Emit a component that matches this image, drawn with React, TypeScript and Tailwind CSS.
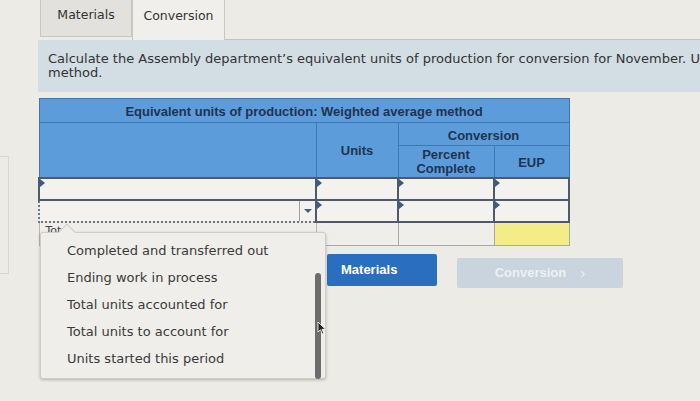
import React from 'react';

const options = [
  'Completed and transferred out',
  'Ending work in process',
  'Total units accounted for',
  'Total units to account for',
  'Units started this period',
];

// small triangle marker in the corner of the entry cells
const Marker = () => (
  <span className="absolute left-0 top-0 w-0 h-0 border-t-[4px] border-b-[4px] border-l-[5px] border-t-transparent border-b-transparent border-l-[#3a5a8a]" />
);

const InputCell = ({ marker = true }: { marker?: boolean }) => (
  <td className="relative p-0 border-2 border-[#4c5a6c] bg-[#f3f2ee]">
    {marker && <Marker />}
  </td>
);

export default function App() {
  return (
    <div className="relative w-[700px] h-[401px] overflow-hidden bg-[#ecebe6] font-['DejaVu_Sans',sans-serif] text-[#333]">
      {/* faint sidebar remnants */}
      <div className="absolute left-0 top-[156px] w-[9px] h-[118px] border border-l-0 border-[#d8d6d1]" />

      {/* Tabs */}
      <div className="flex h-[40px]">
        <div className="w-[40px]" />
        <div className="w-[92px] h-[37px] border border-t-0 border-[#c9c7c2] bg-[#e2e1dd] flex items-start justify-center pt-[6px] text-[12.5px] text-[#333]">
          Materials
        </div>
        <div className="w-[93px] h-[40px] border border-t-0 border-b-0 border-[#c9c7c2] bg-[#f0efeb] flex items-start justify-center pt-[7px] text-[12.5px] text-[#333]">
          Conversion
        </div>
        <div className="flex-1 border-b border-[#bfc3c6]" />
      </div>

      {/* Instructions */}
      <div className="ml-[38px] h-[52px] bg-[#d3dde4] px-[10px] pt-[12px] text-[13px] leading-[14px] text-[#333] whitespace-nowrap overflow-hidden">
        Calculate the Assembly department’s equivalent units of production for conversion for November. Use the weighted average
        <br />
        method.
      </div>

      {/* Table */}
      <div className="ml-[38px] mt-[6px] w-[530px]">
        <table className="w-[530px] border-collapse table-fixed font-['Liberation_Sans',Arial,sans-serif] font-bold text-[13px] leading-[15px] text-[#1f3350]">
          <colgroup>
            <col className="w-[277px]" />
            <col className="w-[82px]" />
            <col className="w-[96px]" />
            <col className="w-[75px]" />
          </colgroup>
          <tbody>
            <tr className="h-[24px] bg-[#5d9cdb]">
              <td colSpan={4} className="border border-[#3f77b3] text-center p-0 pt-[1px]">
                Equivalent units of production: Weighted average method
              </td>
            </tr>
            <tr className="h-[23px] bg-[#5d9cdb]">
              <td rowSpan={2} className="border border-[#3f77b3] p-0" />
              <td rowSpan={2} className="border border-[#3f77b3] text-center align-middle p-0 pt-[2px]">Units</td>
              <td colSpan={2} className="border border-[#3f77b3] text-center p-0 pt-[3px]">Conversion</td>
            </tr>
            <tr className="h-[32px] bg-[#5d9cdb]">
              <td className="border border-[#3f77b3] text-center leading-[14px] p-0 pt-[1px]">
                Percent
                <br />
                Complete
              </td>
              <td className="border border-[#3f77b3] text-center p-0 pt-[2px]">EUP</td>
            </tr>
            <tr className="h-[22px]">
              <InputCell />
              <InputCell />
              <InputCell />
              <InputCell />
            </tr>
            <tr className="h-[22px]">
              <td className="relative p-0 border-2 border-dotted border-[#6a7686] bg-[#f3f2ee]">
                <div className="absolute right-0 top-0 bottom-0 w-[16px] border-l border-[#9aa2ac] flex items-center justify-center">
                  <span className="w-0 h-0 border-l-[4px] border-r-[4px] border-t-[4px] border-l-transparent border-r-transparent border-t-[#46607f]" />
                </div>
              </td>
              <InputCell />
              <InputCell />
              <InputCell />
            </tr>
            <tr className="h-[24px]">
              <td className="relative p-0 border border-[#b9b7b2] bg-[#efeeea] font-['DejaVu_Sans',sans-serif] font-normal text-[11px] text-[#444] align-top pl-[6px]">
                Tot
              </td>
              <td className="p-0 border border-[#a9a9a9] bg-[#efeeea]" />
              <td className="p-0 border border-[#a9a9a9] bg-[#efeeea]" />
              <td className="p-0 border border-[#a9a9a9] bg-[#f4ec86]" />
            </tr>
          </tbody>
        </table>
      </div>

      {/* Buttons */}
      <div className="flex items-start gap-[20px] ml-[327px] mt-[8px] font-['Liberation_Sans',Arial,sans-serif] font-bold text-[13px]">
        <div className="w-[110px] h-[32px] bg-[#2a6ec0] text-white flex items-center pl-[14px] rounded-[2px]">
          Materials
        </div>
        <div className="w-[166px] h-[30px] mt-[4px] bg-[#c9d4de] text-[#eef1f4] flex items-center justify-center gap-[14px] rounded-[2px]">
          <span>Conversion</span>
          <span className="font-normal text-[15px]">›</span>
        </div>
      </div>

      {/* Open dropdown list */}
      <div className="absolute left-[40px] top-[232px] w-[286px] h-[147px] bg-[#efeeea] border border-[#cfcdc8] rounded-[3px] shadow-[0_1px_3px_rgba(0,0,0,0.25)]">
        <span className="absolute left-[20px] -top-[7px] w-[12px] h-[12px] rotate-45 bg-[#efeeea] border-l border-t border-[#cfcdc8]" />
        <ul className="pt-[9px] pl-[26px] text-[13px] text-[#3a3a3a]">
          {options.map((o) => (
            <li key={o} className="h-[27px] leading-[18px]">
              {o}
            </li>
          ))}
        </ul>
        <div className="absolute right-[4px] top-[40px] w-[6px] h-[106px] rounded-full bg-[#6c6c6c]" />
        {/* mouse pointer */}
        <svg className="absolute left-[276px] top-[88px]" width="10" height="14" viewBox="0 0 10 14">
          <path d="M1 1 L1 11 L3.5 8.8 L5.3 13 L6.8 12.3 L5 8.3 L8.5 8.3 Z" fill="#222" stroke="#fff" strokeWidth="0.8" />
        </svg>
      </div>
    </div>
  );
}
